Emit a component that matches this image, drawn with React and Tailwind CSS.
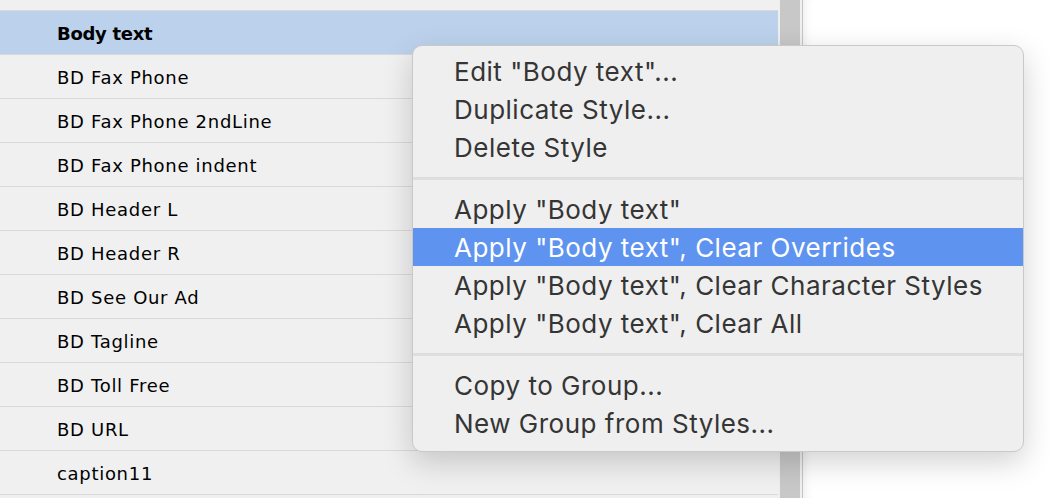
import { Fragment } from 'react'

const rows = [
  'BD Fax Phone',
  'BD Fax Phone 2ndLine',
  'BD Fax Phone indent',
  'BD Header L',
  'BD Header R',
  'BD See Our Ad',
  'BD Tagline',
  'BD Toll Free',
  'BD URL',
  'caption11',
]

const groups = [
  ['Edit "Body text"...', 'Duplicate Style...', 'Delete Style'],
  ['Apply "Body text"', 'Apply "Body text", Clear Overrides', 'Apply "Body text", Clear Character Styles', 'Apply "Body text", Clear All'],
  ['Copy to Group...', 'New Group from Styles...'],
]

const listFont = { fontFamily: '"DejaVu Sans", "Lucida Grande", sans-serif' }
const menuFont = { fontFamily: 'Inter, "Liberation Sans", sans-serif' }

function StyleRow({ label, selected }) {
  return (
    <div
      className={`flex h-[44px] shrink-0 items-center border-b border-[#d9d9d9] pt-[2px] pl-[57px] text-[18px] text-black ${selected ? 'bg-[#bcd2ec] font-bold tracking-[-0.3px]' : 'bg-[#f0f0f0] tracking-[0.7px]'}`}
      style={listFont}
    >
      {label}
    </div>
  )
}

function ContextMenu() {
  return (
    <div
      className="absolute left-[412px] top-[45px] w-[612px] rounded-[10px] border border-[#c9c9c9] bg-[#efefef] pt-[6px] pb-[9px] shadow-[0_10px_30px_rgba(0,0,0,0.18)]"
      style={menuFont}
    >
      {groups.map((items, gi) => (
        <Fragment key={gi}>
          {gi > 0 ? (
            <div className="flex h-[24px] items-center">
              <div className="h-[3px] w-full bg-[#dedede]" />
            </div>
          ) : null}
          {items.map((item) => {
            const active = item === 'Apply "Body text", Clear Overrides'
            return (
              <div
                key={item}
                className={`flex h-[38px] items-center pl-[41px] text-[26px] tracking-[0.5px] ${active ? 'bg-[#5e93ef] text-white' : 'text-[#353535]'}`}
              >
                {item}
              </div>
            )
          })}
        </Fragment>
      ))}
    </div>
  )
}

export default function App() {
  return (
    <div className="relative flex h-[498px] w-[1050px] overflow-hidden bg-white">
      <div className="flex w-[778px] shrink-0 flex-col bg-[#f0f0f0]">
        <div className="-mt-[33px] flex h-[44px] shrink-0 items-center border-b border-[#d9d9d9] pl-[57px] text-[18px] tracking-[0.7px] text-black" style={listFont}>
          Body (p) style
        </div>
        <StyleRow label="Body text" selected />
        {rows.map((row) => (
          <StyleRow key={row} label={row} />
        ))}
      </div>
      <div className="w-[2px] shrink-0 bg-[#efefef]" />
      <div className="w-[20px] shrink-0 bg-[#c8c8c8]" />
      <div className="w-[2px] shrink-0 bg-[#f0f0f0]" />
      <div className="w-[1px] shrink-0 bg-[#c4c4c4]" />
      <div className="flex-1 bg-white shadow-[inset_8px_0_8px_-6px_rgba(0,0,0,0.08)]" />
      <ContextMenu />
    </div>
  )
}
